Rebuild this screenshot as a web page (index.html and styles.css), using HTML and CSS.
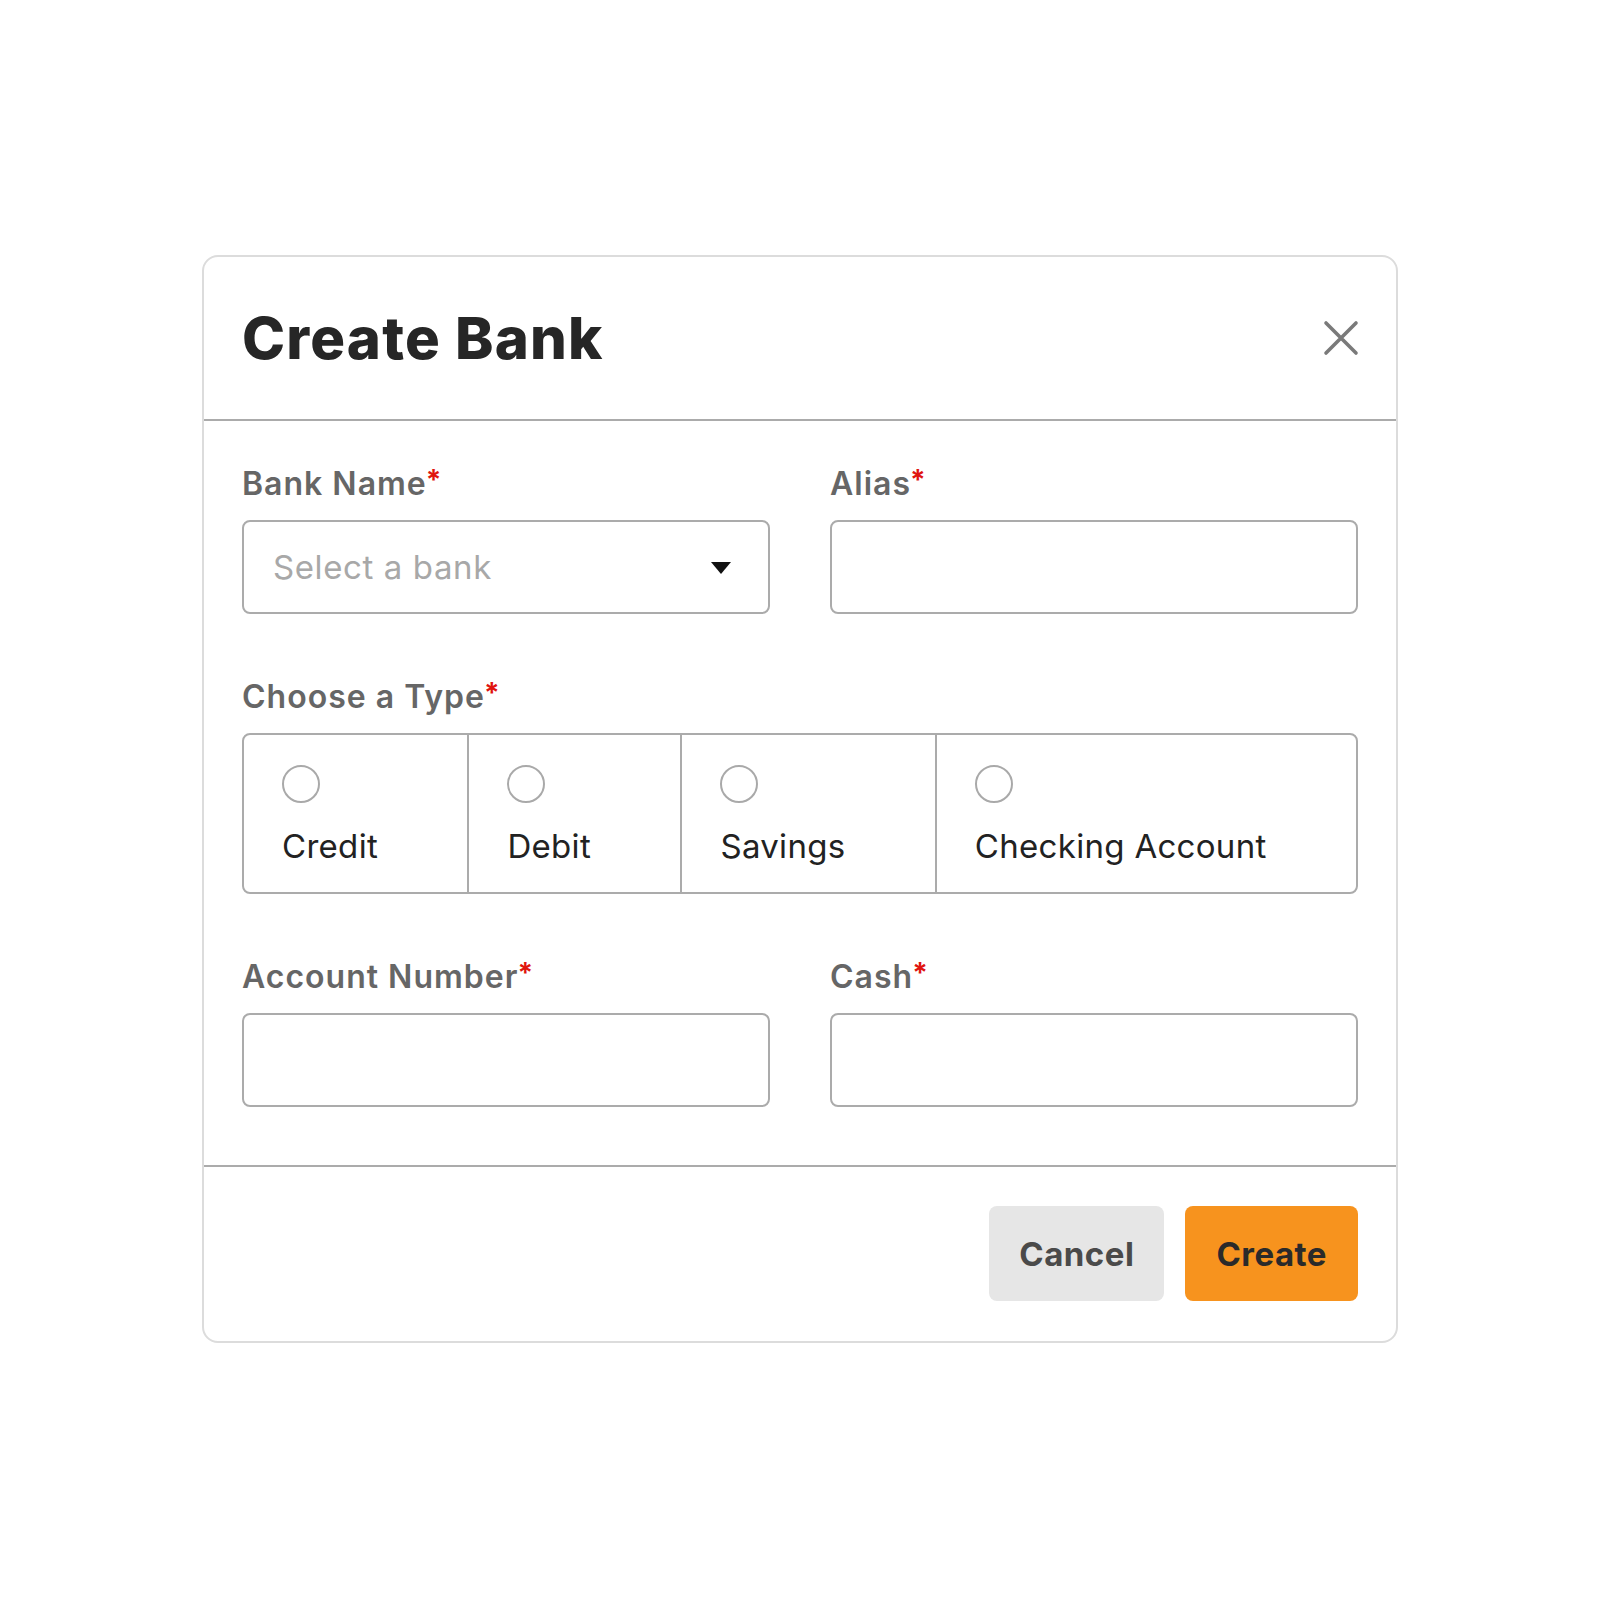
FILE: index.html
```html
<!DOCTYPE html>
<html lang="en">
<head>
<meta charset="utf-8">
<title>Create Bank</title>
<link rel="stylesheet" href="styles.css">
</head>
<body>
<div class="page">
  <div class="modal">
    <div class="modal-header">
      <h1 class="modal-title">Create Bank</h1>
      <button class="close-btn" aria-label="Close">
        <svg width="36" height="36" viewBox="0 0 36 36"><path d="M3 3 L33 33 M33 3 L3 33" stroke="#7a7a7a" stroke-width="3.6" stroke-linecap="round" fill="none"/></svg>
      </button>
    </div>
    <div class="modal-body">
      <div class="row">
        <div class="field">
          <label class="label">Bank Name<span class="req">*</span></label>
          <div class="box select">
            <span class="placeholder">Select a bank</span>
            <svg class="caret" width="20" height="12" viewBox="0 0 20 12"><path d="M0 0 H20 L10 12 Z" fill="#111"/></svg>
          </div>
        </div>
        <div class="field">
          <label class="label">Alias<span class="req">*</span></label>
          <div class="box"></div>
        </div>
      </div>
      <div class="row-full">
        <label class="label">Choose a Type<span class="req">*</span></label>
        <div class="types">
          <div class="type"><span class="radio"></span><span class="type-label">Credit</span></div>
          <div class="type"><span class="radio"></span><span class="type-label">Debit</span></div>
          <div class="type"><span class="radio"></span><span class="type-label">Savings</span></div>
          <div class="type"><span class="radio"></span><span class="type-label">Checking Account</span></div>
        </div>
      </div>
      <div class="row">
        <div class="field">
          <label class="label">Account Number<span class="req">*</span></label>
          <div class="box"></div>
        </div>
        <div class="field">
          <label class="label">Cash<span class="req">*</span></label>
          <div class="box"></div>
        </div>
      </div>
    </div>
    <div class="modal-footer">
      <button class="btn btn-cancel">Cancel</button>
      <button class="btn btn-create">Create</button>
    </div>
  </div>
</div>
</body>
</html>
```
FILE: styles.css
```css
* { box-sizing: border-box; }
html, body { margin: 0; padding: 0; background: #fff; }
body { font-family: "Inter", "Lato", "Liberation Sans", sans-serif; }

.page {
  padding: 255px 0 0 202px;
}

.modal {
  width: 1196px;
  border: 2px solid #dcdcdc;
  border-radius: 16px;
  background: #fff;
}

.modal-header {
  height: 164px;
  display: flex;
  align-items: center;
  justify-content: space-between;
  padding: 0 37px 0 38px;
  border-bottom: 2px solid #ababab;
}

.modal-title {
  margin: 0;
  font-size: 58px;
  font-weight: 800;
  color: #262626;
  letter-spacing: 1.2px;
  line-height: 70px;
}

.close-btn {
  background: none;
  border: 0;
  padding: 0;
  width: 36px;
  height: 36px;
  display: flex;
}

.modal-body {
  padding: 43px 38px 58px;
  display: flex;
  flex-direction: column;
  gap: 63px;
}

.row {
  display: flex;
  gap: 60px;
}

.field {
  flex: 1 1 0;
  display: flex;
  flex-direction: column;
}

.row-full {
  display: flex;
  flex-direction: column;
}

.label {
  font-size: 32px;
  font-weight: 600;
  color: #666;
  line-height: 40px;
  margin-bottom: 16px;
  letter-spacing: 1px;
}

.req {
  color: #e0150f;
  font-size: 28px;
  font-weight: 700;
  vertical-align: top;
  position: relative;
  top: -4px;
  margin-left: -1px;
}

.box {
  height: 94px;
  border: 2px solid #ababab;
  border-radius: 8px;
  background: #fff;
}

.select {
  display: flex;
  align-items: center;
  justify-content: space-between;
  padding: 0 37px 0 29px;
}

.placeholder {
  font-size: 33px;
  color: #a8a8a8;
  letter-spacing: 0.6px;
}

.caret { margin-top: 2px; }

.types {
  display: flex;
  border: 2px solid #ababab;
  border-radius: 8px;
  height: 161px;
}

.type {
  flex: 1 1 auto;
  display: flex;
  flex-direction: column;
  align-items: flex-start;
  padding: 30px 38px 0;
  border-left: 2px solid #ababab;
}

.type:first-child { border-left: 0; }

.radio {
  width: 38px;
  height: 38px;
  border: 2px solid #a9a9a9;
  border-radius: 50%;
  margin-bottom: 23px;
}

.type-label {
  font-size: 33px;
  color: #222;
  line-height: 40px;
  letter-spacing: 0.3px;
}

.modal-footer {
  border-top: 2px solid #ababab;
  padding: 39px 38px 40px;
  display: flex;
  justify-content: flex-end;
  gap: 21px;
}

.btn {
  height: 95px;
  border: 0;
  border-radius: 8px;
  font-family: inherit;
  font-size: 33px;
  font-weight: 700;
  padding: 0 31px;
  letter-spacing: 0.5px;
}

.btn-cancel {
  background: #e6e6e6;
  color: #4a4a4a;
  padding: 0 30px;
}

.btn-create {
  background: #f7931e;
  color: #2a2a2a;
}
```
